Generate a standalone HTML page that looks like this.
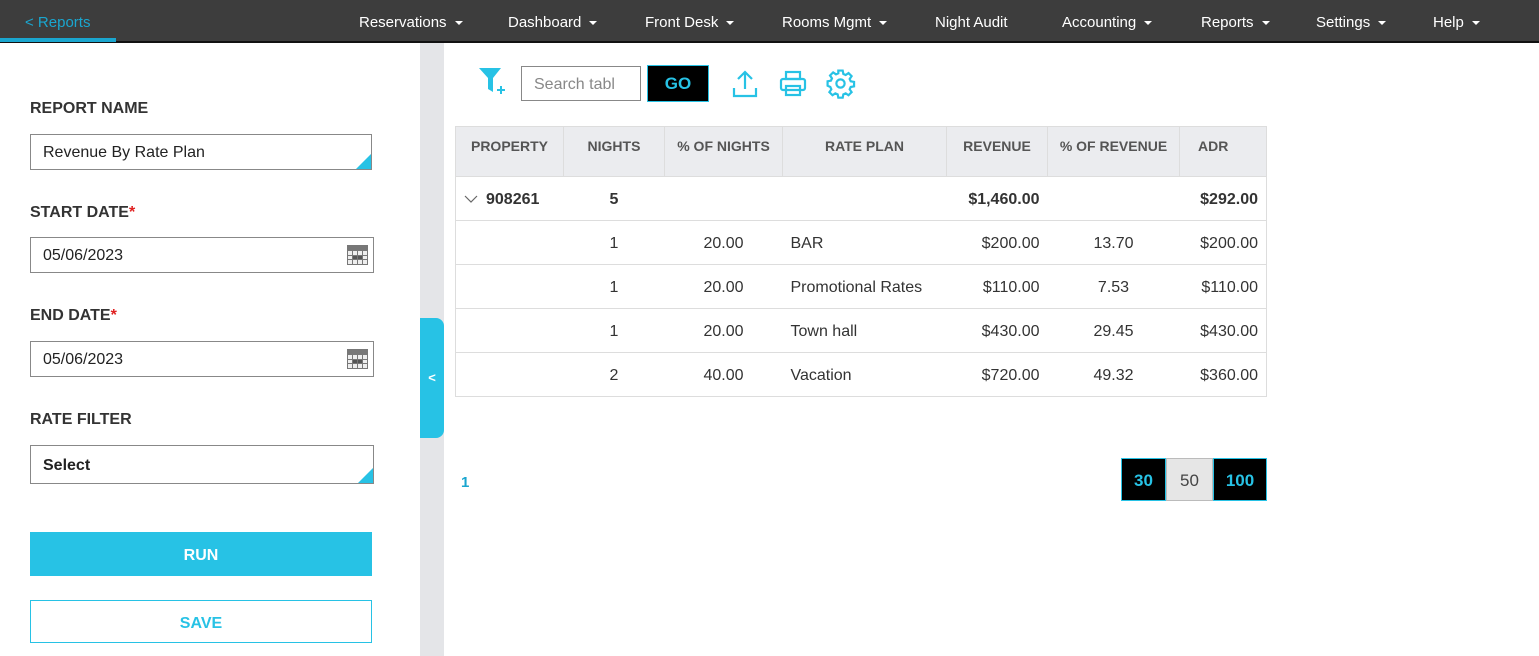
<!DOCTYPE html>
<html><head><style>
*{box-sizing:border-box;margin:0;padding:0}
body{width:1539px;height:656px;overflow:hidden;background:#fff;font-family:"Liberation Sans",Arial,sans-serif;color:#333;position:relative}
.nav{position:absolute;left:0;top:0;width:1539px;height:43px;background:#3d3d3d;border-bottom:2px solid #111}
.nav .back{position:absolute;left:0;top:0;width:116px;height:42px;border-bottom:4px solid #1aa6cf;color:#1aa6cf;font-size:15px;padding:14px 0 0 25px}
.nav .it{position:absolute;top:14px;color:#fff;font-size:15px;white-space:nowrap}
.car{display:inline-block;width:0;height:0;border-left:4px solid transparent;border-right:4px solid transparent;border-top:4px solid #fff;margin-left:8px;vertical-align:middle}
.lbl{position:absolute;left:30px;font-size:16px;font-weight:bold;color:#333}
.lbl b{color:#e02020}
.inp{position:absolute;left:30px;width:342px;height:36px;border:1px solid #888;font-size:16px;padding:9px 12px;color:#222}
.tri{position:absolute;right:0;bottom:0;width:0;height:0;border-left:15px solid transparent;border-bottom:15px solid #27c2e5}
.cal{position:absolute;right:5px;top:7px;width:21px;height:20px;background:#777;display:grid;grid-template-columns:repeat(4,1fr);grid-template-rows:4px repeat(3,1fr);gap:1px;padding:1px}
.cal i{background:#eee}.cal i.h{grid-column:span 4;background:#777}.cal i.d{background:#555}
.strip{position:absolute;left:420px;top:43px;width:24px;height:613px;background:#e4e5e8}
.tab{position:absolute;left:420px;top:318px;width:24px;height:120px;background:#27c2e5;border-radius:0 8px 8px 0;color:#fff;font-size:13px;text-align:center;line-height:120px;font-weight:bold}
table{position:absolute;left:455px;top:126px;border-collapse:collapse;font-size:16px}
th{background:#ebecef;height:50px;font-size:14px;color:#555;font-weight:bold;border:1px solid #ddd;padding:0 8px;vertical-align:top;padding-top:11px}
td{height:44px;border-top:1px solid #ddd;padding:2px 8px 0;color:#333}
table{border:1px solid #ddd}
.r{text-align:right}.c{text-align:center}
.btn{position:absolute;left:30px;width:342px;text-align:center;font-weight:bold;font-size:16px}
</style></head><body>
<div class="nav">
<div class="back">&lt; Reports</div>
<div class="it" style="left:359px">Reservations<span class="car"></span></div>
<div class="it" style="left:508px">Dashboard<span class="car"></span></div>
<div class="it" style="left:645px">Front Desk<span class="car"></span></div>
<div class="it" style="left:782px">Rooms Mgmt<span class="car"></span></div>
<div class="it" style="left:935px">Night Audit</div>
<div class="it" style="left:1062px">Accounting<span class="car"></span></div>
<div class="it" style="left:1201px">Reports<span class="car"></span></div>
<div class="it" style="left:1316px">Settings<span class="car"></span></div>
<div class="it" style="left:1433px">Help<span class="car"></span></div>
</div>

<div class="lbl" style="top:100px">REPORT NAME</div>
<div class="inp" style="top:134px">Revenue By Rate Plan<div class="tri"></div></div>
<div class="lbl" style="top:204px">START DATE<b>*</b></div>
<div class="inp" style="top:237px;width:344px">05/06/2023<div class="cal"><i class="h"></i><i></i><i></i><i></i><i></i><i></i><i class="d"></i><i class="d"></i><i></i><i></i><i></i><i></i><i></i></div></div>
<div class="lbl" style="top:307px">END DATE<b>*</b></div>
<div class="inp" style="top:341px;width:344px">05/06/2023<div class="cal"><i class="h"></i><i></i><i></i><i></i><i></i><i></i><i class="d"></i><i class="d"></i><i></i><i></i><i></i><i></i><i></i></div></div>
<div class="lbl" style="top:411px">RATE FILTER</div>
<div class="inp" style="top:445px;width:344px;height:39px;font-weight:bold;padding-top:11px">Select<div class="tri"></div></div>
<div class="btn" style="top:532px;height:44px;background:#27c2e5;color:#fff;line-height:47px">RUN</div>
<div class="btn" style="top:600px;height:43px;border:1px solid #27c2e5;color:#27c2e5;line-height:45px">SAVE</div>

<div class="strip"></div>
<div class="tab">&lt;</div>

<svg style="position:absolute;left:478px;top:66px" width="30" height="32" viewBox="0 0 30 32"><path d="M1 2h22l-8 10v14l-5-3V12z" fill="#27c2e5"/><path d="M19 24h8M23 20v8" stroke="#27c2e5" stroke-width="2"/></svg>
<div style="position:absolute;left:521px;top:66px;width:120px;height:35px;border:1px solid #888;color:#888;font-size:16px;padding:9px 12px">Search tabl</div>
<div style="position:absolute;left:647px;top:65px;width:62px;height:37px;background:#000;border:1px solid #27c2e5;color:#27c2e5;font-weight:bold;font-size:17px;text-align:center;line-height:36px">GO</div>
<svg style="position:absolute;left:731px;top:69px" width="28" height="30" viewBox="0 0 28 30" fill="none" stroke="#27c2e5" stroke-width="2.2"><path d="M14 20V3M7 10l7-7 7 7M3 19v8h22v-8"/></svg>
<svg style="position:absolute;left:778px;top:69px" width="30" height="30" viewBox="0 0 30 30" fill="none" stroke="#27c2e5" stroke-width="2.2"><rect x="8" y="3" width="14" height="7"/><rect x="3" y="10" width="24" height="11" rx="2"/><rect x="8" y="17" width="14" height="9"/></svg>
<svg style="position:absolute;left:825px;top:68px" width="31" height="31" viewBox="0 0 24 24" fill="none" stroke="#27c2e5" stroke-width="1.7"><circle cx="12" cy="12" r="3.2"/><path d="M10.3 2h3.4l.5 2.6 1.8.8 2.2-1.5 2.4 2.4-1.5 2.2.8 1.8 2.6.5v3.4l-2.6.5-.8 1.8 1.5 2.2-2.4 2.4-2.2-1.5-1.8.8-.5 2.6h-3.4l-.5-2.6-1.8-.8-2.2 1.5-2.4-2.4 1.5-2.2-.8-1.8L2 13.7v-3.4l2.6-.5.8-1.8-1.5-2.2 2.4-2.4 2.2 1.5 1.8-.8z"/></svg>

<table>
<tr><th style="width:108px">PROPERTY</th><th style="width:101px">NIGHTS</th><th style="width:118px">% OF NIGHTS</th><th style="width:164px">RATE PLAN</th><th style="width:101px">REVENUE</th><th style="width:132px">% OF REVENUE</th><th style="width:87px;text-align:left;padding-left:18px">ADR</th></tr>
<tr style="font-weight:bold"><td><svg width="14" height="10" viewBox="0 0 14 10" style="margin-right:8px"><path d="M1 2l6 6 6-6" fill="none" stroke="#666" stroke-width="1.2"/></svg>908261</td><td class="c">5</td><td></td><td></td><td class="r">$1,460.00</td><td></td><td class="r">$292.00</td></tr>
<tr><td></td><td class="c">1</td><td class="c">20.00</td><td>BAR</td><td class="r">$200.00</td><td class="c">13.70</td><td class="r">$200.00</td></tr>
<tr><td></td><td class="c">1</td><td class="c">20.00</td><td>Promotional Rates</td><td class="r">$110.00</td><td class="c">7.53</td><td class="r">$110.00</td></tr>
<tr><td></td><td class="c">1</td><td class="c">20.00</td><td>Town hall</td><td class="r">$430.00</td><td class="c">29.45</td><td class="r">$430.00</td></tr>
<tr><td></td><td class="c">2</td><td class="c">40.00</td><td>Vacation</td><td class="r">$720.00</td><td class="c">49.32</td><td class="r">$360.00</td></tr>
</table>

<div style="position:absolute;left:461px;top:474px;color:#1aa6cf;font-weight:bold;font-size:15px">1</div>
<div style="position:absolute;left:1121px;top:458px;display:flex;font-size:17px;font-weight:bold">
<div style="width:45px;height:43px;background:#000;border:1px solid #27c2e5;color:#27c2e5;text-align:center;line-height:44px">30</div>
<div style="width:47px;height:43px;background:#e6e6e6;border:1px solid #bbb;color:#444;font-weight:normal;text-align:center;line-height:44px">50</div>
<div style="width:54px;height:43px;background:#000;border:1px solid #27c2e5;color:#27c2e5;text-align:center;line-height:44px">100</div>
</div>
</body></html>
